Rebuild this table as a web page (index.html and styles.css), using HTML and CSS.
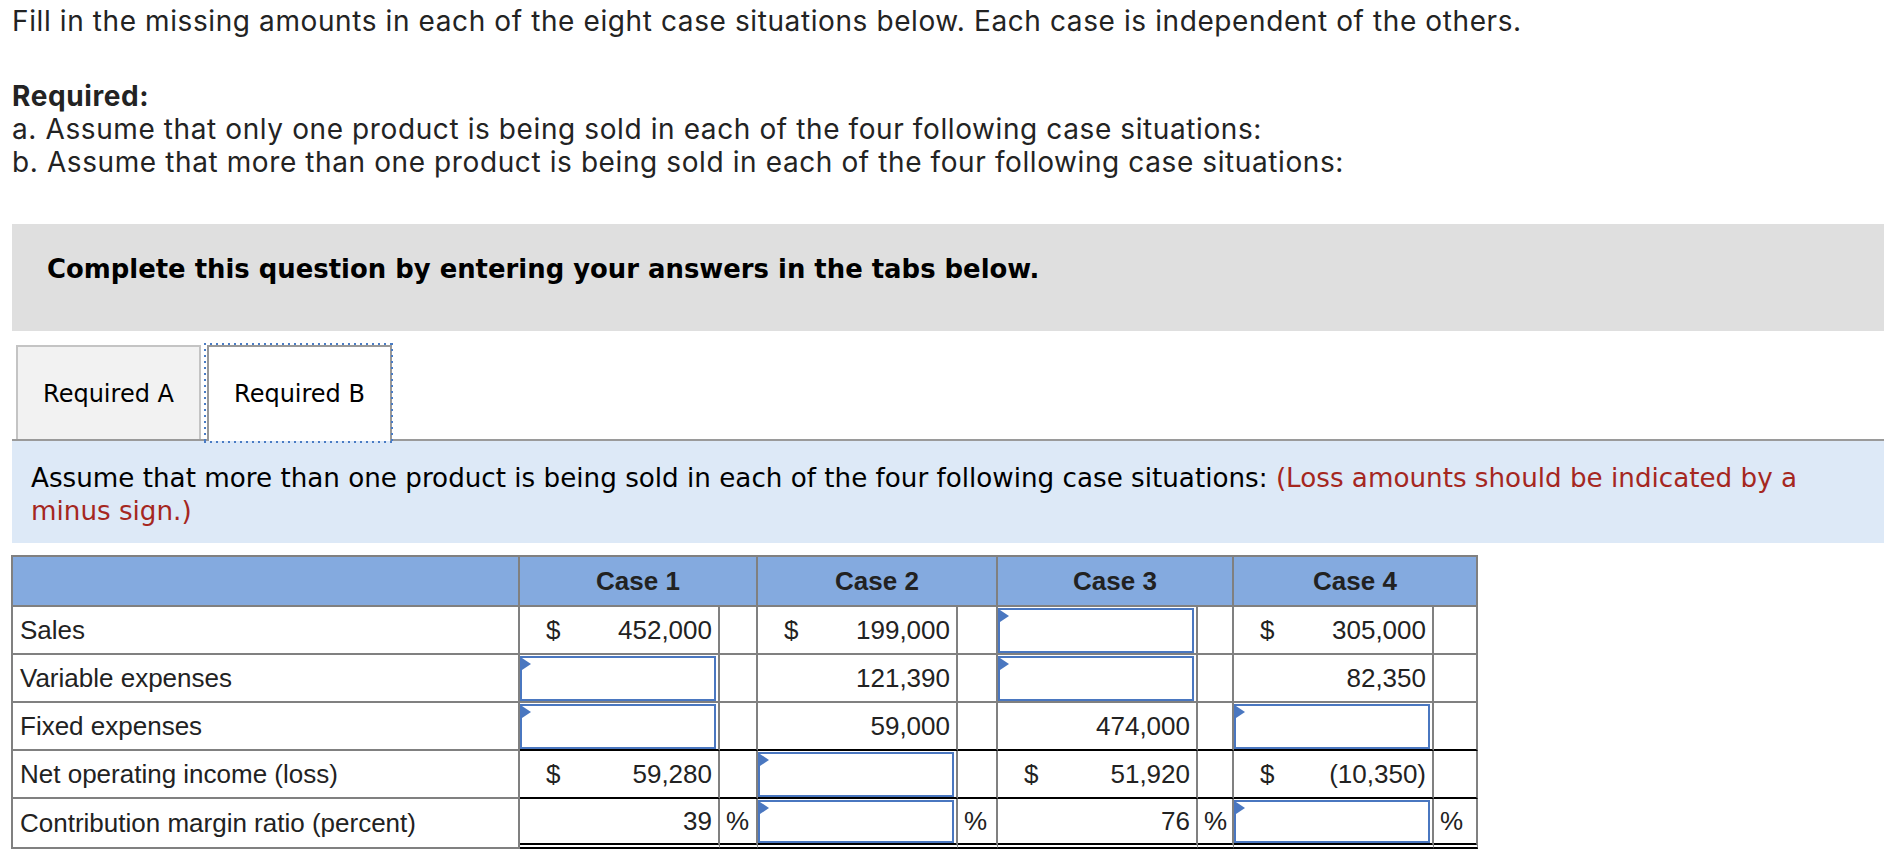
FILE: index.html
```html
<!DOCTYPE html>
<html lang="en">
<head>
<meta charset="utf-8">
<title>Case situations</title>
<link rel="stylesheet" href="styles.css">
</head>
<body>
<div class="page">
  <p class="intro">Fill in the missing amounts in each of the eight case situations below. Each case is independent of the others.</p>
  <div class="required">
    <p class="req-title">Required:</p>
    <p>a. Assume that only one product is being sold in each of the four following case situations:</p>
    <p>b. Assume that more than one product is being sold in each of the four following case situations:</p>
  </div>

  <div class="instructions">Complete this question by entering your answers in the tabs below.</div>

  <div class="tabs">
    <div class="tab">Required A</div>
    <div class="tab active">Required B</div>
  </div>

  <div class="panel">Assume that more than one product is being sold in each of the four following case situations: <span class="warn">(Loss amounts should be indicated by a minus sign.)</span></div>

  <table class="grid">
    <colgroup>
      <col class="w-label">
      <col class="w-amt"><col class="w-p38">
      <col class="w-amt"><col class="w-p40">
      <col class="w-amt"><col class="w-p36">
      <col class="w-amt"><col class="w-p44">
    </colgroup>
    <thead>
      <tr>
        <th class="lbl"></th>
        <th colspan="2">Case 1</th>
        <th colspan="2">Case 2</th>
        <th colspan="2">Case 3</th>
        <th colspan="2">Case 4</th>
      </tr>
    </thead>
    <tbody>
      <tr>
        <td class="lbl">Sales</td>
        <td class="amt"><div class="money"><span>$</span><span>452,000</span></div></td>
        <td class="pct"></td>
        <td class="amt"><div class="money"><span>$</span><span>199,000</span></div></td>
        <td class="pct"></td>
        <td class="in-cell"><div class="inp"></div></td>
        <td class="pct"></td>
        <td class="amt"><div class="money"><span>$</span><span>305,000</span></div></td>
        <td class="pct"></td>
      </tr>
      <tr>
        <td class="lbl">Variable expenses</td>
        <td class="in-cell"><div class="inp"></div></td>
        <td class="pct"></td>
        <td class="amt num">121,390</td>
        <td class="pct"></td>
        <td class="in-cell"><div class="inp"></div></td>
        <td class="pct"></td>
        <td class="amt num">82,350</td>
        <td class="pct"></td>
      </tr>
      <tr class="pre-total">
        <td class="lbl">Fixed expenses</td>
        <td class="in-cell"><div class="inp"></div></td>
        <td class="pct"></td>
        <td class="amt num">59,000</td>
        <td class="pct"></td>
        <td class="amt num">474,000</td>
        <td class="pct"></td>
        <td class="in-cell"><div class="inp"></div></td>
        <td class="pct"></td>
      </tr>
      <tr class="pre-total">
        <td class="lbl">Net operating income (loss)</td>
        <td class="amt"><div class="money"><span>$</span><span>59,280</span></div></td>
        <td class="pct"></td>
        <td class="in-cell"><div class="inp"></div></td>
        <td class="pct"></td>
        <td class="amt"><div class="money"><span>$</span><span>51,920</span></div></td>
        <td class="pct"></td>
        <td class="amt"><div class="money"><span>$</span><span>(10,350)</span></div></td>
        <td class="pct"></td>
      </tr>
      <tr class="last">
        <td class="lbl">Contribution margin ratio (percent)</td>
        <td class="amt num">39</td>
        <td class="pct">%</td>
        <td class="in-cell"><div class="inp"></div></td>
        <td class="pct">%</td>
        <td class="amt num">76</td>
        <td class="pct">%</td>
        <td class="in-cell"><div class="inp"></div></td>
        <td class="pct">%</td>
      </tr>
    </tbody>
  </table>
</div>
</body>
</html>
```

FILE: styles.css
```css
* { box-sizing: border-box; }

body {
  margin: 0;
  background: #ffffff;
}

.page {
  padding: 0 10px 20px 12px;
}

.intro,
.required p {
  margin: 0;
  font-family: "Inter", "Open Sans", sans-serif;
  font-size: 28px;
  line-height: 33px;
  letter-spacing: 0.6px;
  color: #232323;
}

.intro {
  padding-top: 5px;
}

.required {
  margin-top: 42px;
}

.required .req-title {
  font-weight: 700;
}

.instructions {
  margin-top: 45px;
  height: 107px;
  padding: 31px 35px 0;
  background: #dfdfdf;
  font-family: "DejaVu Sans", sans-serif;
  font-weight: 700;
  font-size: 25.9px;
  line-height: 29px;
  color: #000;
}

.tabs {
  display: flex;
  align-items: flex-end;
  margin-top: 14px;
  padding-left: 4px;
  border-bottom: 2px solid #9a9a9a;
}

.tab {
  width: 185px;
  height: 94px;
  display: flex;
  align-items: center;
  justify-content: center;
  padding-top: 2px;
  border: 2px solid #c4c4c4;
  border-bottom: none;
  background: #f2f2f2;
  font-family: "DejaVu Sans", sans-serif;
  font-size: 24px;
  color: #000;
}

.tab.active {
  position: relative;
  z-index: 1;
  height: 96px;
  margin-left: 6px;
  margin-bottom: -2px;
  padding-top: 0;
  border-color: #999;
  background: #fff;
}

.tab.active::after {
  content: "";
  position: absolute;
  left: -5px;
  right: -3px;
  top: -4px;
  bottom: -2px;
  background:
    repeating-linear-gradient(90deg, #4a7cc4 0 2px, transparent 2px 6px) left top / 100% 2px no-repeat,
    repeating-linear-gradient(90deg, #4a7cc4 0 2px, transparent 2px 6px) left bottom / 100% 2px no-repeat,
    repeating-linear-gradient(180deg, #4a7cc4 0 2px, transparent 2px 6px) left top / 2px 100% no-repeat,
    repeating-linear-gradient(180deg, #4a7cc4 0 2px, transparent 2px 6px) right top / 2px 100% no-repeat;
}

.panel {
  padding: 21px 20px 15px 19px;
  background: #dde9f7;
  font-family: "DejaVu Sans", sans-serif;
  font-size: 26.2px;
  line-height: 33px;
  color: #000;
}

.warn {
  color: #a5271f;
}

.grid {
  margin-top: 12px;
  margin-left: -1px;
  border-collapse: separate;
  border-spacing: 0;
  table-layout: fixed;
  width: 1465px;
  border-top: 2px solid #808080;
  border-left: 2px solid #808080;
  font-family: "Liberation Sans", Arial, sans-serif;
  font-size: 26px;
  color: #222;
}

.w-label { width: 507px; }
.w-amt { width: 200px; }
.w-p38 { width: 38px; }
.w-p40 { width: 40px; }
.w-p36 { width: 36px; }
.w-p44 { width: 44px; }

.grid th,
.grid td {
  padding: 0;
  border-right: 2px solid #808080;
  border-bottom: 2px solid #808080;
  vertical-align: middle;
  white-space: nowrap;
}

.grid th {
  height: 50px;
  background: #84aadf;
  font-weight: 700;
  text-align: center;
}

.grid td {
  height: 48px;
}

.grid td.lbl {
  padding-left: 7px;
}

.grid td.amt {
  padding: 0 6px 0 26px;
}

.grid td.num {
  text-align: right;
}

.money {
  display: flex;
  justify-content: space-between;
}

.grid td.pct {
  padding-left: 6px;
}

.grid td.in-cell {
  padding: 1px 2px 0 0;
}

.inp {
  position: relative;
  height: 45px;
  border: 2px solid #4a77c0;
  background: #fff;
}

.inp::before {
  content: "";
  position: absolute;
  left: 0;
  top: 0;
  border-left: 9px solid #4a77c0;
  border-top: 6px solid transparent;
  border-bottom: 6px solid transparent;
}

.grid tr.pre-total td:not(.lbl) {
  border-bottom-color: #000;
}

.grid tr.last td {
  height: 50px;
}

.grid tr.last td:not(.lbl) {
  border-bottom: 6px double #000;
}

.grid tr.last td.in-cell .inp {
  height: 43px;
}
```
